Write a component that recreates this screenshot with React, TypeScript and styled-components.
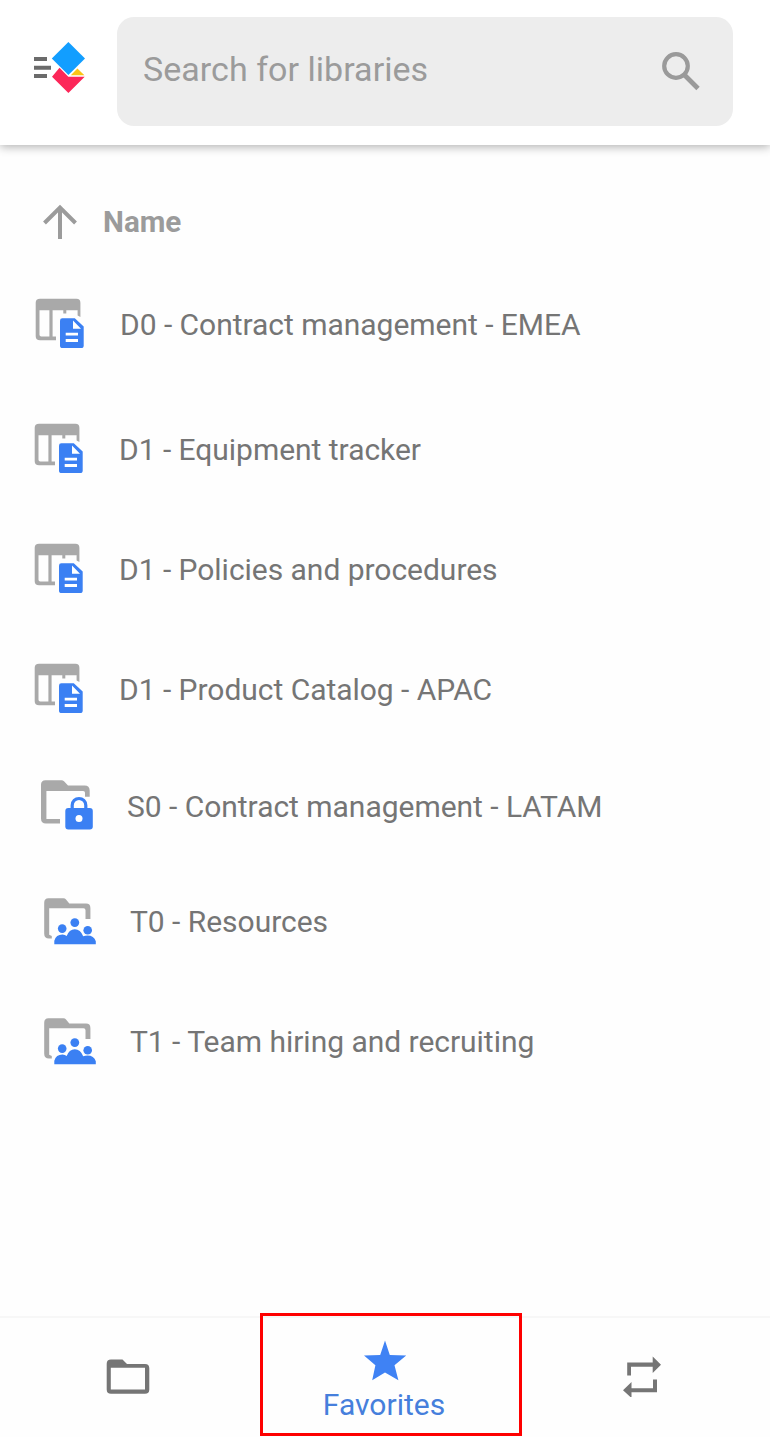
import React from 'react';
import styled, { createGlobalStyle } from 'styled-components';

const GlobalStyle = createGlobalStyle`
  * { box-sizing: border-box; }
  body { margin: 0; background: #fff; font-family: Roboto, sans-serif; }
`;

const Screen = styled.div`
  width: 770px;
  height: 1437px;
  display: flex;
  flex-direction: column;
  background: #fefefe;
  overflow: hidden;
`;

const Header = styled.header`
  flex: none;
  height: 145px;
  display: flex;
  align-items: flex-start;
  padding: 17px 37px 0 30px;
  background: #fff;
  box-shadow: 0 2px 9px rgba(0, 0, 0, 0.3);
`;

const LogoButton = styled.button`
  width: 60px;
  height: 60px;
  margin: 21px 27px 0 0;
  padding: 0;
  border: 0;
  background: none;
`;

const SearchBox = styled.div`
  flex: 1;
  height: 109px;
  display: flex;
  align-items: center;
  justify-content: space-between;
  padding: 0 29px 0 26px;
  border-radius: 17px;
  background: #ededed;
`;

const Placeholder = styled.span`
  font-size: 34px;
  line-height: 40px;
  margin-bottom: 5px;
  letter-spacing: 0.04px;
  color: #9b9b9b;
`;

const List = styled.main`
  flex: 1;
  display: flex;
  flex-direction: column;
  padding-top: 47px;
`;

const SortBar = styled.div`
  height: 60px;
  margin-bottom: 17px;
  padding-left: 30px;
  display: flex;
  align-items: center;
`;

const SortLabel = styled.span`
  margin-left: 13px;
  font-size: 29.6px;
  font-weight: 700;
  color: #9b9b9b;
`;

const Row = styled.div<{ $left: number; $gap: number }>`
  height: 110px;
  margin-top: ${(p) => p.$gap}px;
  padding-left: ${(p) => p.$left}px;
  display: flex;
  align-items: center;
`;

const RowLabel = styled.span`
  margin-left: 28px;
  padding-top: 1px;
  font-size: 30px;
  line-height: 35px;
  letter-spacing: -0.03px;
  white-space: nowrap;
  color: #757575;
`;

const Icon = styled.svg`
  display: block;
  flex: none;
`;

const TabBar = styled.nav`
  position: relative;
  flex: none;
  height: 121px;
  display: grid;
  grid-template-columns: 257px 256px 257px;
  border-top: 2px solid #f7f7f7;
  background: #fefefe;
`;

const Tab = styled.div<{ $active?: boolean }>`
  display: flex;
  flex-direction: column;
  align-items: center;
  padding-top: ${(p) => (p.$active ? 20 : 35)}px;
  color: ${(p) => (p.$active ? '#3f82f4' : '#757575')};
`;

const TabLabel = styled.span`
  margin: 5px 2px 0 0;
  font-size: 30px;
  line-height: 35px;
  color: #467fdc;
`;

const Highlight = styled.div`
  position: absolute;
  left: 260px;
  top: -5px;
  width: 262px;
  height: 123px;
  border: 3px solid #fe0000;
`;

const GREY = '#a9a9a9';
const BLUE = '#3b80f3';

const Logo = () => (
  <Icon width="60" height="60" viewBox="0 0 60 60">
    <path d="M4 19h13v4H4zM4 27.7h17v4H4zM4 36h13v4H4z" fill="#6b6b6b" />
    <path d="M38.4 4L55 20.5 38.4 37 21.8 20.5z" fill="#129eff" />
    <path d="M29.5 29.8L38.3 38.7H54.7L38.4 55 22 38.7z" fill="#fc2759" />
    <path d="M40.8 37.3L47.4 30.5 54.4 37.3z" fill="#fbc414" />
  </Icon>
);

const SearchIcon = () => (
  <Icon width="44" height="44" viewBox="0 0 44 44" fill="none" stroke="#9a9a9a">
    <circle cx="16" cy="16" r="11.8" strokeWidth="4.2" />
    <path d="M24.5 25L38 38.5" strokeWidth="4.8" />
  </Icon>
);

const ArrowUp = () => (
  <Icon width="60" height="60" viewBox="0 0 60 60" fill="none" stroke="#9b9b9b" strokeWidth="4">
    <path d="M30 47V16M14.5 31L30 15.5 45.5 31" />
  </Icon>
);

const LibraryIcon = () => (
  <Icon width="62" height="60" viewBox="0 0 62 60">
    <path
      d="M10 4.7H46.5Q50.4 4.7 50.4 8.7V23L47.6 21.5V16.2H36.3V19.5H33.3V16.2H22.6V42.6H26V46.2H10Q5.7 46.2 5.7 42.2V8.7Q5.7 4.7 10 4.7zM9.5 16.2V40.8Q9.5 42.6 11.3 42.6H19.4V16.2z"
      fill={GREY}
      fillRule="evenodd"
    />
    <path d="M32.4 24.2H44.8L53.7 32.5V51.4Q53.7 54 51.1 54H32.6Q30 54 30 51.4V26.6Q30 24.2 32.4 24.2z" fill={BLUE} />
    <path d="M43 26.5V34.8H51zM35.7 38.7H48V41.6H35.7zM35.7 45H48V48H35.7z" fill="#fff" />
  </Icon>
);

const LockedFolderIcon = () => (
  <Icon width="62" height="60" viewBox="0 0 62 60">
    <path
      d="M8.5 4.3H24.6Q26 4.3 27 5.3L31 9.6H47.5Q52.7 9.6 52.7 14.8V20.8H48V16.8Q48 14.9 46.1 14.9H9.4V43H23V47.4H9Q4 47.4 4 42.4V8.8Q4 4.3 8.5 4.3z"
      fill={GREY}
    />
    <path d="M35.2 34V29.3A6.8 6.8 0 0 1 48.8 29.3V34" fill="none" stroke={BLUE} strokeWidth="3.2" />
    <rect x="28.3" y="32" width="27.5" height="21.6" rx="3" fill={BLUE} />
    <circle cx="42" cy="42.4" r="3.5" fill="#fff" />
  </Icon>
);

const TeamFolderIcon = () => (
  <Icon width="62" height="60" viewBox="0 0 62 60">
    <path
      d="M8.5 7.3H23.5Q25 7.3 26 8.5L29.3 12.6H46Q50.4 12.6 50.4 17V27.9H45.5V19.2Q45.5 17.2 43.5 17.2H9.2V43.7L11.8 45V47.6H9Q4.2 47.6 4.2 42.8V11.8Q4.2 7.3 8.5 7.3z"
      fill={GREY}
    />
    <g fill={BLUE}>
      <circle cx="34.8" cy="31.6" r="4.4" />
      <circle cx="22.2" cy="37.6" r="4.3" />
      <circle cx="47.7" cy="39.2" r="4.3" />
      <path d="M14.3 53.3V49.8Q16 43.6 22.5 43.6 25 43.6 26.7 45.1 29 38.2 34.8 38.2 40.5 38.2 43.2 45.3 45.2 44.5 47.5 44.5 54 44.5 55.8 50.3V53.3z" />
    </g>
  </Icon>
);

const FolderIcon = () => (
  <Icon width="46" height="44" viewBox="0 0 46 44">
    <path
      d="M5 6.5H16.5L21 11H39Q43.3 11 43.3 15.3V36.5Q43.3 40.8 39 40.8H5Q.7 40.8 .7 36.5V10.8Q.7 6.5 5 6.5zM4.8 14.8V36.6H39V14.8z"
      fill="currentColor"
      fillRule="evenodd"
    />
  </Icon>
);

const StarIcon = () => (
  <Icon width="44" height="44" viewBox="0 0 44 44">
    <path d="M22 2.5L26.8 17 43.2 17.5 31.5 27.2 35.4 42.3 22 34.5 9.2 42.3 12.4 27.2 1 17.5 17.2 17z" fill="currentColor" />
  </Icon>
);

const RepeatIcon = () => (
  <Icon width="44" height="44" viewBox="0 0 44 44">
    <path
      d="M7.2 22.5V9.6H32.7V3.5L41 11.8 32.7 20V13.8H11V22.5zM37 26.5V39.2H11.5V45L3 37.2 11.5 28.9V35.2H33V26.5z"
      fill="currentColor"
    />
  </Icon>
);

const libraries = [
  { name: 'D0 - Contract management - EMEA', icon: LibraryIcon, left: 30, gap: 0 },
  { name: 'D1 - Equipment tracker', icon: LibraryIcon, left: 29, gap: 15 },
  { name: 'D1 - Policies and procedures', icon: LibraryIcon, left: 29, gap: 10 },
  { name: 'D1 - Product Catalog - APAC', icon: LibraryIcon, left: 29, gap: 10 },
  { name: 'S0 - Contract management - LATAM', icon: LockedFolderIcon, left: 37, gap: 7 },
  { name: 'T0 - Resources', icon: TeamFolderIcon, left: 40, gap: 5 },
  { name: 'T1 - Team hiring and recruiting', icon: TeamFolderIcon, left: 40, gap: 10 },
];

export default function App() {
  return (
    <>
      <GlobalStyle />
      <Screen>
        <Header>
          <LogoButton aria-label="Menu">
            <Logo />
          </LogoButton>
          <SearchBox>
            <Placeholder>Search for libraries</Placeholder>
            <SearchIcon />
          </SearchBox>
        </Header>
        <List>
          <SortBar>
            <ArrowUp />
            <SortLabel>Name</SortLabel>
          </SortBar>
          {libraries.map(({ name, icon: RowIcon, left, gap }) => (
            <Row key={name} $left={left} $gap={gap}>
              <RowIcon />
              <RowLabel>{name}</RowLabel>
            </Row>
          ))}
        </List>
        <TabBar>
          <Tab>
            <FolderIcon />
          </Tab>
          <Tab $active>
            <StarIcon />
            <TabLabel>Favorites</TabLabel>
          </Tab>
          <Tab>
            <RepeatIcon />
          </Tab>
          <Highlight />
        </TabBar>
      </Screen>
    </>
  );
}
